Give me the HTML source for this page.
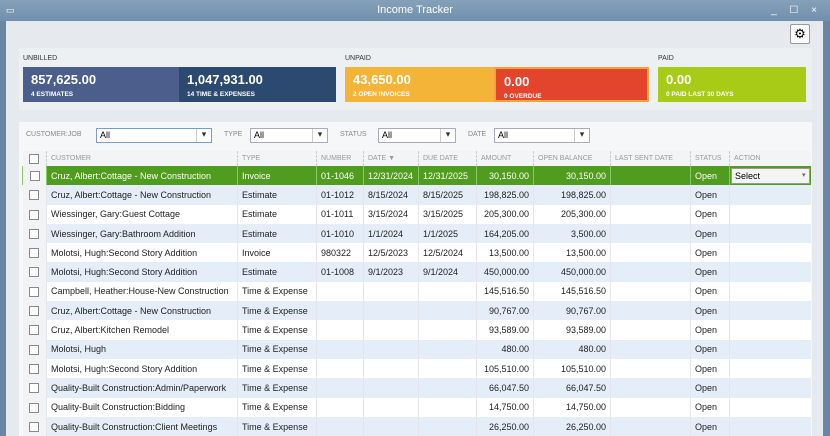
<!DOCTYPE html>
<html><head><meta charset="utf-8"><style>
*{margin:0;padding:0;box-sizing:border-box}
body{width:830px;height:436px;overflow:hidden;background:#e6eaef;font-family:"Liberation Sans",sans-serif;position:relative}
.title{position:absolute;left:0;top:0;width:830px;height:21px;background:linear-gradient(#86a0b9,#7190ad);color:#fff;font-size:11px;text-align:center;line-height:21px}
.lb{position:absolute;left:0;top:21px;width:6px;height:415px;background:#6a86a3}
.rb{position:absolute;left:823px;top:21px;width:7px;height:415px;background:#6a86a3}
.sum{position:absolute;left:19px;top:48px;width:793px;height:62px;background:#edf0f3}
.lab{position:absolute;font-size:7px;color:#333;top:55px}
.box{position:absolute;top:67px;height:35px;color:#fff;padding:5px 0 0 8px}
.box b{display:block;font-size:13px}
.box i{display:block;font-style:normal;font-weight:bold;font-size:6.5px;margin-top:4px}
.grid{position:absolute;left:19px;top:122px;width:793px;height:314px;background:#f6f7f9}
.fl{position:absolute;top:131px;font-size:7px;color:#888}
.sel{position:absolute;top:128px;height:15px;border:1px solid #aab;background:#fff;font-size:9px;padding:1px 3px;color:#000}
.sel:after{content:"▾";position:absolute;right:0;top:0;width:14px;height:13px;border-left:1px solid #ccc;text-align:center;font-size:9px;color:#333}
table{position:absolute;left:22px;top:151px;border-collapse:collapse;font-size:9px;color:#222;table-layout:fixed}
td,th{height:19.3px;padding:0 4px;white-space:nowrap;overflow:hidden;border-left:1px solid #e3e6ea}
th{height:15px;font-weight:normal;font-size:7px;color:#999;text-align:left;background:#f3f4f6;border-left:1px dashed #ccc}
td.r{text-align:right}
tr.b td{background:#e4edf8}
tr.w td{background:#fff}
tr.g td{background:#4f9c1f;color:#fff;border-left:1px solid #8cc66a}
td.c,th.c{background:#f2f3f5 !important;border-left:none;text-align:center}
.cb{display:inline-block;width:10px;height:10px;border:1px solid #888;background:#fff;vertical-align:middle}
</style></head><body>
<div class="title">Income Tracker<span style="position:absolute;left:6px;top:0;font-size:9px">▭</span><span style="position:absolute;right:8px;top:0;font-size:10px;letter-spacing:5px">_ ☐ ×</span></div>
<div class="lb"></div><div class="rb"></div>
<div style="position:absolute;left:790px;top:24px;width:20px;height:20px;background:#fafafa;border:1px solid #999;border-radius:2px;text-align:center;font-size:13px;line-height:18px">⚙</div>
<div class="sum"></div>
<div class="lab" style="left:23px">UNBILLED</div>
<div class="lab" style="left:345px">UNPAID</div>
<div class="lab" style="left:658px">PAID</div>
<div class="box" style="left:23px;width:156px;background:#4c5f8c"><b>857,625.00</b><i>4 ESTIMATES</i></div>
<div class="box" style="left:179px;width:157px;background:#2c4a6f"><b>1,047,931.00</b><i>14 TIME &amp; EXPENSES</i></div>
<div class="box" style="left:345px;width:149px;background:#f3b437"><b>43,650.00</b><i>2 OPEN INVOICES</i></div>
<div class="box" style="left:494px;width:155px;background:#e2442c;border:2px solid #f1a33a"><b>0.00</b><i>0 OVERDUE</i></div>
<div class="box" style="left:658px;width:148px;background:#a7cb17"><b>0.00</b><i>0 PAID LAST 30 DAYS</i></div>
<div class="grid"></div>
<div class="fl" style="left:26px">CUSTOMER:JOB</div>
<div class="sel" style="left:96px;width:116px;border-color:#7b9bc8">All</div>
<div class="fl" style="left:224px">TYPE</div>
<div class="sel" style="left:250px;width:78px">All</div>
<div class="fl" style="left:340px">STATUS</div>
<div class="sel" style="left:378px;width:78px">All</div>
<div class="fl" style="left:468px">DATE</div>
<div class="sel" style="left:494px;width:96px">All</div>
<table>
<colgroup><col style="width:24px"><col style="width:191px"><col style="width:79px"><col style="width:47px"><col style="width:55px"><col style="width:58px"><col style="width:57px"><col style="width:77px"><col style="width:80px"><col style="width:39px"><col style="width:81px"></colgroup>
<tr><th class="c"><span class="cb"></span></th><th>CUSTOMER</th><th>TYPE</th><th>NUMBER</th><th>DATE ▼</th><th>DUE DATE</th><th>AMOUNT</th><th>OPEN BALANCE</th><th>LAST SENT DATE</th><th>STATUS</th><th>ACTION</th></tr>
<tr class="g"><td class="c"><span class="cb"></span></td><td>Cruz, Albert:Cottage - New Construction</td><td>Invoice</td><td>01-1046</td><td>12/31/2024</td><td>12/31/2025</td><td class="r">30,150.00</td><td class="r">30,150.00</td><td></td><td>Open</td><td style="background:#4f9c1f;padding:1px"><div style="background:#f4f4f4;color:#000;border:1px solid #999;height:16px;line-height:14px;padding:0 3px;position:relative">Select<span style="position:absolute;right:3px;font-size:7px;color:#666">▾</span></div></td></tr>
<tr class="b"><td class="c"><span class="cb"></span></td><td>Cruz, Albert:Cottage - New Construction</td><td>Estimate</td><td>01-1012</td><td>8/15/2024</td><td>8/15/2025</td><td class="r">198,825.00</td><td class="r">198,825.00</td><td></td><td>Open</td><td></td></tr>
<tr class="w"><td class="c"><span class="cb"></span></td><td>Wiessinger, Gary:Guest Cottage</td><td>Estimate</td><td>01-1011</td><td>3/15/2024</td><td>3/15/2025</td><td class="r">205,300.00</td><td class="r">205,300.00</td><td></td><td>Open</td><td></td></tr>
<tr class="b"><td class="c"><span class="cb"></span></td><td>Wiessinger, Gary:Bathroom Addition</td><td>Estimate</td><td>01-1010</td><td>1/1/2024</td><td>1/1/2025</td><td class="r">164,205.00</td><td class="r">3,500.00</td><td></td><td>Open</td><td></td></tr>
<tr class="w"><td class="c"><span class="cb"></span></td><td>Molotsi, Hugh:Second Story Addition</td><td>Invoice</td><td>980322</td><td>12/5/2023</td><td>12/5/2024</td><td class="r">13,500.00</td><td class="r">13,500.00</td><td></td><td>Open</td><td></td></tr>
<tr class="b"><td class="c"><span class="cb"></span></td><td>Molotsi, Hugh:Second Story Addition</td><td>Estimate</td><td>01-1008</td><td>9/1/2023</td><td>9/1/2024</td><td class="r">450,000.00</td><td class="r">450,000.00</td><td></td><td>Open</td><td></td></tr>
<tr class="w"><td class="c"><span class="cb"></span></td><td>Campbell, Heather:House-New Construction</td><td>Time &amp; Expense</td><td></td><td></td><td></td><td class="r">145,516.50</td><td class="r">145,516.50</td><td></td><td>Open</td><td></td></tr>
<tr class="b"><td class="c"><span class="cb"></span></td><td>Cruz, Albert:Cottage - New Construction</td><td>Time &amp; Expense</td><td></td><td></td><td></td><td class="r">90,767.00</td><td class="r">90,767.00</td><td></td><td>Open</td><td></td></tr>
<tr class="w"><td class="c"><span class="cb"></span></td><td>Cruz, Albert:Kitchen Remodel</td><td>Time &amp; Expense</td><td></td><td></td><td></td><td class="r">93,589.00</td><td class="r">93,589.00</td><td></td><td>Open</td><td></td></tr>
<tr class="b"><td class="c"><span class="cb"></span></td><td>Molotsi, Hugh</td><td>Time &amp; Expense</td><td></td><td></td><td></td><td class="r">480.00</td><td class="r">480.00</td><td></td><td>Open</td><td></td></tr>
<tr class="w"><td class="c"><span class="cb"></span></td><td>Molotsi, Hugh:Second Story Addition</td><td>Time &amp; Expense</td><td></td><td></td><td></td><td class="r">105,510.00</td><td class="r">105,510.00</td><td></td><td>Open</td><td></td></tr>
<tr class="b"><td class="c"><span class="cb"></span></td><td>Quality-Built Construction:Admin/Paperwork</td><td>Time &amp; Expense</td><td></td><td></td><td></td><td class="r">66,047.50</td><td class="r">66,047.50</td><td></td><td>Open</td><td></td></tr>
<tr class="w"><td class="c"><span class="cb"></span></td><td>Quality-Built Construction:Bidding</td><td>Time &amp; Expense</td><td></td><td></td><td></td><td class="r">14,750.00</td><td class="r">14,750.00</td><td></td><td>Open</td><td></td></tr>
<tr class="b"><td class="c"><span class="cb"></span></td><td>Quality-Built Construction:Client Meetings</td><td>Time &amp; Expense</td><td></td><td></td><td></td><td class="r">26,250.00</td><td class="r">26,250.00</td><td></td><td>Open</td><td></td></tr>
</table>
</body></html>
